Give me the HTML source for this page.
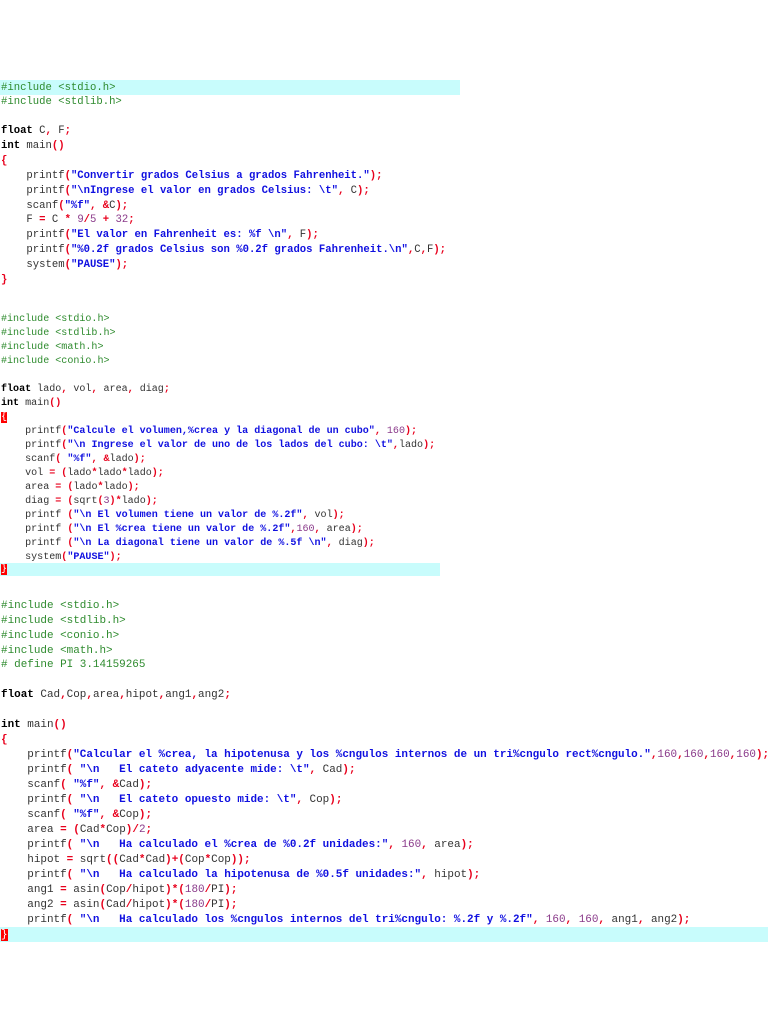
<!DOCTYPE html>
<html><head><meta charset="utf-8"><style>
body{margin:0;width:768px;height:1024px;background:#fff;position:relative;overflow:hidden}
.l{position:absolute;left:1px;white-space:pre;font-family:"Liberation Mono",monospace;font-size:10.6px;line-height:14px;color:#333}
.c2 .l{font-size:10.05px}
.c3 .l{font-size:10.95px}
.g{color:#2e8b2e}.k{font-weight:bold;color:#000}.r{color:#e8001c;font-weight:bold}.b{color:#1010e0;font-weight:bold}.n{color:#8a3a8a}
.hl{position:absolute;background:#c8fcfc}
.rb{background:#f00;color:#fff}
</style></head><body>
<div class="hl" style="left:0;top:80px;width:460px;height:15px"></div>
<div class="hl" style="left:0;top:563px;width:440px;height:13px"></div>
<div class="hl" style="left:0;top:927px;width:768px;height:15px"></div>

<div class="l g" style="top:81px">#include &lt;stdio.h&gt;</div>
<div class="l g" style="top:95px">#include &lt;stdlib.h&gt;</div>
<div class="l" style="top:124px"><span class="k">float</span> C<span class="r">,</span> F<span class="r">;</span></div>
<div class="l" style="top:139px"><span class="k">int</span> main<span class="r">()</span></div>
<div class="l" style="top:154px"><span class="r">{</span></div>
<div class="l" style="top:169px">    printf<span class="r">(</span><span class="b">"Convertir grados Celsius a grados Fahrenheit."</span><span class="r">);</span></div>
<div class="l" style="top:184px">    printf<span class="r">(</span><span class="b">"\nIngrese el valor en grados Celsius: \t"</span><span class="r">,</span> C<span class="r">);</span></div>
<div class="l" style="top:199px">    scanf<span class="r">(</span><span class="b">"%f"</span><span class="r">, &amp;</span>C<span class="r">);</span></div>
<div class="l" style="top:213px">    F <span class="r">=</span> C <span class="r">*</span> <span class="n">9</span><span class="r">/</span><span class="n">5</span> <span class="r">+</span> <span class="n">32</span><span class="r">;</span></div>
<div class="l" style="top:228px">    printf<span class="r">(</span><span class="b">"El valor en Fahrenheit es: %f \n"</span><span class="r">,</span> F<span class="r">);</span></div>
<div class="l" style="top:243px">    printf<span class="r">(</span><span class="b">"%0.2f grados Celsius son %0.2f grados Fahrenheit.\n"</span><span class="r">,</span>C<span class="r">,</span>F<span class="r">);</span></div>
<div class="l" style="top:258px">    system<span class="r">(</span><span class="b">"PAUSE"</span><span class="r">);</span></div>
<div class="l" style="top:273px"><span class="r">}</span></div>

<div class="c2">
<div class="l g" style="top:313px">#include &lt;stdio.h&gt;</div>
<div class="l g" style="top:327px">#include &lt;stdlib.h&gt;</div>
<div class="l g" style="top:341px">#include &lt;math.h&gt;</div>
<div class="l g" style="top:355px">#include &lt;conio.h&gt;</div>
<div class="l" style="top:383px"><span class="k">float</span> lado<span class="r">,</span> vol<span class="r">,</span> area<span class="r">,</span> diag<span class="r">;</span></div>
<div class="l" style="top:397px"><span class="k">int</span> main<span class="r">()</span></div>
<div class="l" style="top:411px"><span class="rb">{</span></div>
<div class="l" style="top:425px">    printf<span class="r">(</span><span class="b">"Calcule el volumen,%crea y la diagonal de un cubo"</span><span class="r">,</span> <span class="n">160</span><span class="r">);</span></div>
<div class="l" style="top:439px">    printf<span class="r">(</span><span class="b">"\n Ingrese el valor de uno de los lados del cubo: \t"</span><span class="r">,</span>lado<span class="r">);</span></div>
<div class="l" style="top:453px">    scanf<span class="r">(</span> <span class="b">"%f"</span><span class="r">, &amp;</span>lado<span class="r">);</span></div>
<div class="l" style="top:467px">    vol <span class="r">=</span> <span class="r">(</span>lado<span class="r">*</span>lado<span class="r">*</span>lado<span class="r">);</span></div>
<div class="l" style="top:481px">    area <span class="r">=</span> <span class="r">(</span>lado<span class="r">*</span>lado<span class="r">);</span></div>
<div class="l" style="top:495px">    diag <span class="r">=</span> <span class="r">(</span>sqrt<span class="r">(</span><span class="n">3</span><span class="r">)*</span>lado<span class="r">);</span></div>
<div class="l" style="top:509px">    printf <span class="r">(</span><span class="b">"\n El volumen tiene un valor de %.2f"</span><span class="r">,</span> vol<span class="r">);</span></div>
<div class="l" style="top:523px">    printf <span class="r">(</span><span class="b">"\n El %crea tiene un valor de %.2f"</span><span class="r">,</span><span class="n">160</span><span class="r">,</span> area<span class="r">);</span></div>
<div class="l" style="top:537px">    printf <span class="r">(</span><span class="b">"\n La diagonal tiene un valor de %.5f \n"</span><span class="r">,</span> diag<span class="r">);</span></div>
<div class="l" style="top:551px">    system<span class="r">(</span><span class="b">"PAUSE"</span><span class="r">);</span></div>
<div class="l" style="top:563px"><span class="rb">}</span></div>
</div>

<div class="c3">
<div class="l g" style="top:599px">#include &lt;stdio.h&gt;</div>
<div class="l g" style="top:614px">#include &lt;stdlib.h&gt;</div>
<div class="l g" style="top:629px">#include &lt;conio.h&gt;</div>
<div class="l g" style="top:644px">#include &lt;math.h&gt;</div>
<div class="l g" style="top:658px"># define PI 3.14159265</div>
<div class="l" style="top:688px"><span class="k">float</span> Cad<span class="r">,</span>Cop<span class="r">,</span>area<span class="r">,</span>hipot<span class="r">,</span>ang1<span class="r">,</span>ang2<span class="r">;</span></div>
<div class="l" style="top:718px"><span class="k">int</span> main<span class="r">()</span></div>
<div class="l" style="top:733px"><span class="r">{</span></div>
<div class="l" style="top:748px">    printf<span class="r">(</span><span class="b">"Calcular el %crea, la hipotenusa y los %cngulos internos de un tri%cngulo rect%cngulo."</span><span class="r">,</span><span class="n">160</span><span class="r">,</span><span class="n">160</span><span class="r">,</span><span class="n">160</span><span class="r">,</span><span class="n">160</span><span class="r">);</span></div>
<div class="l" style="top:763px">    printf<span class="r">(</span> <span class="b">"\n   El cateto adyacente mide: \t"</span><span class="r">,</span> Cad<span class="r">);</span></div>
<div class="l" style="top:778px">    scanf<span class="r">(</span> <span class="b">"%f"</span><span class="r">, &amp;</span>Cad<span class="r">);</span></div>
<div class="l" style="top:793px">    printf<span class="r">(</span> <span class="b">"\n   El cateto opuesto mide: \t"</span><span class="r">,</span> Cop<span class="r">);</span></div>
<div class="l" style="top:808px">    scanf<span class="r">(</span> <span class="b">"%f"</span><span class="r">, &amp;</span>Cop<span class="r">);</span></div>
<div class="l" style="top:823px">    area <span class="r">=</span> <span class="r">(</span>Cad<span class="r">*</span>Cop<span class="r">)/</span><span class="n">2</span><span class="r">;</span></div>
<div class="l" style="top:838px">    printf<span class="r">(</span> <span class="b">"\n   Ha calculado el %crea de %0.2f unidades:"</span><span class="r">,</span> <span class="n">160</span><span class="r">,</span> area<span class="r">);</span></div>
<div class="l" style="top:853px">    hipot <span class="r">=</span> sqrt<span class="r">((</span>Cad<span class="r">*</span>Cad<span class="r">)+(</span>Cop<span class="r">*</span>Cop<span class="r">));</span></div>
<div class="l" style="top:868px">    printf<span class="r">(</span> <span class="b">"\n   Ha calculado la hipotenusa de %0.5f unidades:"</span><span class="r">,</span> hipot<span class="r">);</span></div>
<div class="l" style="top:883px">    ang1 <span class="r">=</span> asin<span class="r">(</span>Cop<span class="r">/</span>hipot<span class="r">)*(</span><span class="n">180</span><span class="r">/</span>PI<span class="r">);</span></div>
<div class="l" style="top:898px">    ang2 <span class="r">=</span> asin<span class="r">(</span>Cad<span class="r">/</span>hipot<span class="r">)*(</span><span class="n">180</span><span class="r">/</span>PI<span class="r">);</span></div>
<div class="l" style="top:913px">    printf<span class="r">(</span> <span class="b">"\n   Ha calculado los %cngulos internos del tri%cngulo: %.2f y %.2f"</span><span class="r">,</span> <span class="n">160</span><span class="r">,</span> <span class="n">160</span><span class="r">,</span> ang1<span class="r">,</span> ang2<span class="r">);</span></div>
<div class="l" style="top:928px"><span class="rb">}</span></div>
</div>
</body></html>
